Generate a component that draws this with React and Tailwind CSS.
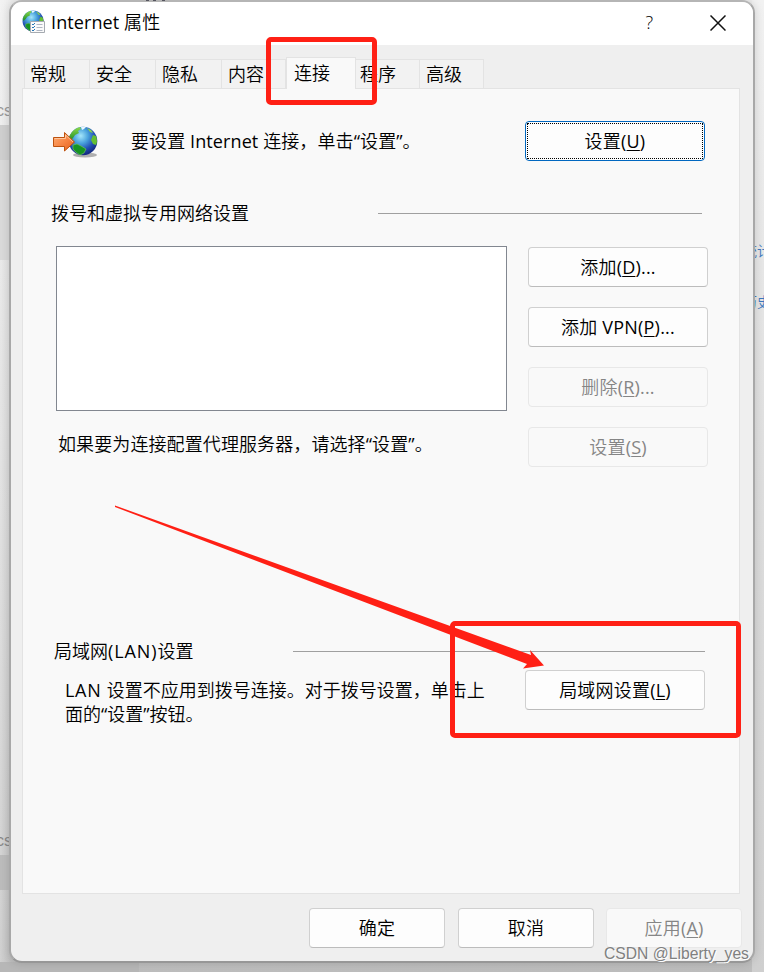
import clsx from 'clsx';

const tabs = [
  { name: '常规', className: 'w-[66px] border-l pl-[5px]' },
  { name: '安全', className: 'w-[66px] pl-[6px]' },
  { name: '隐私', className: 'w-[66px] pl-[6px]' },
  { name: '内容', className: 'w-[64px] pl-[6px]' },
  { name: '连接', active: true, className: 'w-[70px] pl-[7px]' },
  { name: '程序', className: 'w-[64px] pl-[4px]' },
  { name: '高级', className: 'w-[64px] pl-[6px]' },
];

function Globe({ id }) {
  return (
    <>
      <defs>
        <radialGradient id={id} cx="42%" cy="32%" r="65%">
          <stop offset="0" stopColor="#a5e6fa" />
          <stop offset="0.4" stopColor="#4aa3dd" />
          <stop offset="0.75" stopColor="#2350b4" />
          <stop offset="1" stopColor="#152e86" />
        </radialGradient>
        <linearGradient id={id + '-land'} x1="0" y1="0" x2="0" y2="1">
          <stop offset="0" stopColor="#8ed94a" />
          <stop offset="1" stopColor="#178a24" />
        </linearGradient>
      </defs>
      <circle cx="15" cy="15" r="14.3" fill={`url(#${id})`} />
      <path d="M2 9Q5 3 12 1L13 3L10 5L11 7L7 9L5 12L2 15Q0 12 2 9Z" fill={`url(#${id}-land)`} />
      <path d="M5 19L9 18L13 20L18 23L16 27L12 29Q7 26 5 23Z" fill="#169324" stroke="#79cd5d" strokeWidth="0.6" />
      <path d="M25 9L28 10Q30 15 28 19L25 18L23 14Z" fill="#64bf33" />
      <path d="M19 2L23 4L25 7L22 6Z" fill="#8bd34b" />
      <path d="M13 1L18 1L16 3L14 4Z" fill="#e8f8ff" />
    </>
  );
}

function TitleIcon() {
  return (
    <svg width="25" height="25" viewBox="0 0 25 25">
      <g transform="scale(0.74)">
        <Globe id="title-globe" />
      </g>
      <path d="M8.5 11.5H22.5V22.5H8.5Z" fill="#fafafa" stroke="#a5aab0" />
      <path d="M10 14l1 1l2-2M10 17l1 1l2-2M10 20l1 1l2-2" fill="none" stroke="#2675b5" />
      <path d="M14.5 14.5h6M14.5 17.5h6M14.5 20.5h6" stroke="#b0b6c2" />
    </svg>
  );
}

function ConnectIcon() {
  return (
    <svg width="48" height="36" viewBox="0 0 48 36">
      <defs>
        <linearGradient id="arrow" x1="0" y1="0" x2="1" y2="1">
          <stop offset="0" stopColor="#ffb27a" />
          <stop offset="0.5" stopColor="#f78645" />
          <stop offset="1" stopColor="#e45d18" />
        </linearGradient>
      </defs>
      <ellipse cx="33" cy="32" rx="12" ry="2.5" fill="#555" opacity="0.45" />
      <g transform="translate(16 3)">
        <Globe id="connect-globe" />
      </g>
      <path d="M1.5 14.5H12.5V9.5L22.5 19L12.5 28V23.5H1.5Z" fill="url(#arrow)" stroke="#bd520f" />
      <path d="M2.5 15.5H13.5V12L21 19" fill="none" stroke="#ffd0ac" strokeWidth="0.8" />
    </svg>
  );
}

function Button({ label, hotkey, after = '', disabled, focused, className }) {
  return (
    <button
      disabled={disabled}
      className={clsx(
        'flex h-10 shrink-0 items-center justify-center rounded-[4px] border whitespace-nowrap',
        disabled && 'border-[#e8e8e8] bg-[#f9f9f9] text-[#858585]',
        !disabled && !focused && 'border-[#d0d0d0] border-b-[#bcbcbc] bg-[#fdfdfd]',
        focused && 'border-[#0067c0] bg-[#fdfdfd] p-px',
        className
      )}
    >
      <span className={clsx('flex items-center justify-center', focused && 'h-full w-full border border-dotted border-black')}>
        <span className="tracking-[0.2px]">
          {label}
          {hotkey && <>(<span className="underline decoration-1 underline-offset-2">{hotkey}</span>){after}</>}
        </span>
      </span>
    </button>
  );
}

// Parts of the page that show around the edges of the dialog
function Backdrop() {
  return (
    <div className="absolute inset-0 bg-linear-to-b from-[#eeeeee] via-[#d7d7d7] to-[#bdbdbd] text-[16px]">
      <div className="absolute top-0 right-0 h-full w-3 bg-linear-to-b from-[#f2f2f2] via-[#dedede] to-[#cfcfcf]" />
      <div className="absolute top-0 left-0 h-full w-3 bg-linear-to-r from-white/30 to-transparent" />
      <div className="absolute top-[125px] left-0 h-[35px] w-3 bg-[#cfcfcf]" />
      <div className="absolute top-[160px] left-0 h-[100px] w-3 bg-[#dadada]" />
      <div className="absolute top-[855px] left-0 h-[35px] w-3 bg-[#bcbcbc]" />
      <div className="absolute bottom-0 left-0 h-[10px] w-[139px] bg-[#b7b7b7]" />
      <span className="absolute top-[99px] -left-[4px] font-['Liberation_Sans'] text-[#999]">cs</span>
      <span className="absolute top-[829px] -left-[4px] font-['Liberation_Sans'] text-[#888]">cs</span>
      <span className="absolute top-[239px] left-[743px] text-[14px] whitespace-nowrap text-[#3c78c0]">统计</span>
      <span className="absolute top-[290px] left-[743px] text-[14px] whitespace-nowrap text-[#3c78c0]">历史</span>
    </div>
  );
}

function Annotations() {
  return (
    <div className="pointer-events-none absolute inset-0 z-20">
      <div className="absolute top-[37px] left-[266px] h-[68px] w-[111px] rounded-[5px] border-5 border-[#ff2015]" />
      <div className="absolute top-[621px] left-[450px] h-[117px] w-[291px] rounded-[5px] border-5 border-[#ff2015]" />
      <svg className="absolute inset-0" width="764" height="972">
        <path d="M115 505.5L531 655L530 650L544 665.5L523 668.5L527 664L115 507Z" fill="#ff2015" />
        <path d="M146 0.5h3M153 0.5h3M162 0.5h3" stroke="#55555f" />
      </svg>
    </div>
  );
}

export default function App() {
  return (
    <div className="relative h-[972px] w-[764px] overflow-hidden pl-[9px] font-['Open_Sans','Noto_Sans_CJK_SC_DemiLight','Noto_Sans_CJK_SC',sans-serif] text-[18px] leading-6 text-black">
      <Backdrop />

      <div className="relative flex h-[963px] w-[746px] flex-col overflow-hidden rounded-[13px] border-2 border-[#a8a8a8] border-t-[#b5b5b5] border-b-[#979797] bg-[#efefef] shadow-[0_0_10px_rgba(0,0,0,0.15)]">
        <header className="flex h-[43px] shrink-0 items-center bg-white pr-[27px] pb-[3px] pl-[11px]">
          <TitleIcon />
          <h1 className="ml-[4px] grow text-[18px] tracking-[0.1px]">Internet 属性</h1>
          <span className="mr-[57px] font-['Open_Sans'] text-[18px] font-[350]">?</span>
          <svg className="mt-[1px]" width="16" height="16" viewBox="0 0 16 16" stroke="#111" strokeWidth="1.5">
            <path d="M0.5 0.5L15.5 15.5M15.5 0.5L0.5 15.5" />
          </svg>
        </header>

        <nav className="relative z-10 -mb-px ml-[13px] flex h-[44px] shrink-0 items-end">
          {tabs.map((tab) => (
            <div
              key={tab.name}
              className={clsx(
                'box-border shrink-0 border-[#e3e3e3]',
                tab.active
                  ? 'h-[32px] border-x border-t bg-[#f9f9f9] pt-[3px]'
                  : 'h-[30px] border-t border-r border-b bg-[#f2f2f2] pt-[2px]',
                tab.className
              )}
            >
              {tab.name}
            </div>
          ))}
        </nav>

        <main className="ml-[11px] flex h-[806px] w-[718px] shrink-0 flex-col border border-[#e3e3e3] bg-[#f9f9f9]">
          <section className="mt-[32px] flex h-10 items-center pl-[29px]">
            <ConnectIcon />
            <p className="ml-[31px] w-[394px] tracking-[0.1px] whitespace-nowrap">要设置 Internet 连接，单击“设置”。</p>
            <Button label="设置" hotkey="U" focused className="w-[180px] [&>span]:w-full" />
          </section>

          <div className="mt-[40px] flex h-6 items-center pl-[28px]">
            <h2 className="w-[327px]">拨号和虚拟专用网络设置</h2>
            <div className="h-px w-[324px] bg-[#a0a0a0]" />
          </div>

          <section className="mt-[21px] flex gap-[21px] pl-[33px]">
            <div>
              <div className="h-[165px] w-[451px] border border-[#828790] bg-white" />
              <p className="mt-[21px] ml-[2px] tracking-[0.1px] whitespace-nowrap">如果要为连接配置代理服务器，请选择“设置”。</p>
            </div>
            <div className="flex flex-col gap-5 pt-px">
              <Button label="添加" hotkey="D" after="..." className="w-[180px]" />
              <Button label="添加 VPN" hotkey="P" after="..." className="w-[180px]" />
              <Button label="删除" hotkey="R" after="..." disabled className="w-[180px]" />
              <Button label="设置" hotkey="S" disabled className="w-[180px]" />
            </div>
          </section>

          <div className="mt-[172px] flex h-6 items-center pl-[31px]">
            <h2 className="w-[239px]">
              局域网<span className="tracking-[0.9px]">(LAN)</span>设置
            </h2>
            <div className="h-px w-[412px] bg-[#a0a0a0]" />
          </div>

          <section className="mt-[7px] flex pl-[42px]">
            <p className="mt-[8px] w-[460px] whitespace-nowrap">
              <span className="tracking-[0.7px]">LAN </span>设置不应用到拨号连接。对于拨号设置，单击上
              <br />
              面的“设置”按钮。
            </p>
            <Button label="局域网设置" hotkey="L" className="w-[180px]" />
          </section>
        </main>

        <footer className="mt-[14px] flex pl-[298px]">
          <Button label="确定" className="mr-[13px] w-[136px]" />
          <Button label="取消" className="mr-[12px] w-[136px]" />
          <Button label="应用" hotkey="A" disabled className="w-[136px]" />
        </footer>
      </div>

      <Annotations />
      <span className="absolute top-[942px] left-[604px] font-['Liberation_Sans'] text-[15.7px] whitespace-nowrap text-[#808080] [text-shadow:1px_1px_0_#fff]">
        CSDN @Liberty_yes
      </span>
    </div>
  );
}
